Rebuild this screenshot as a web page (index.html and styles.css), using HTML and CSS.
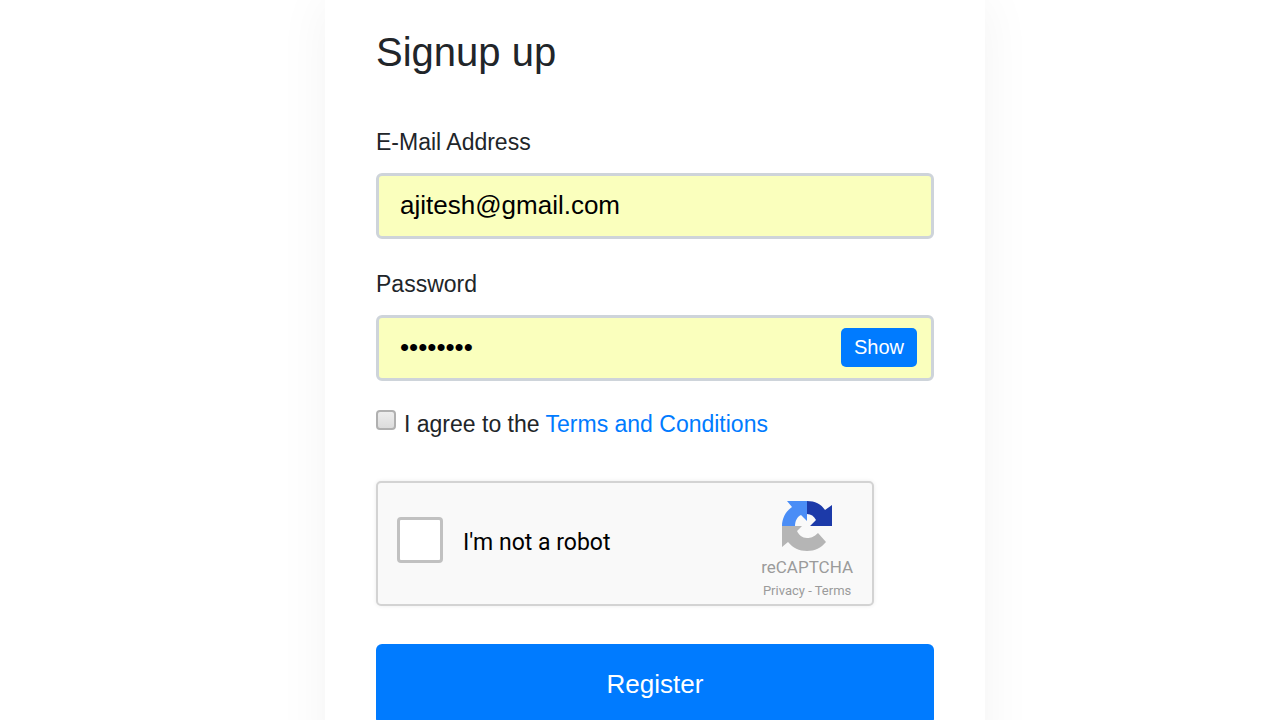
FILE: index.html
```html
<!DOCTYPE html>
<html lang="en">
<head>
  <meta charset="UTF-8" />
  <meta name="viewport" content="width=device-width, initial-scale=1.0"/>
  <title>Signup</title>
  <link rel="stylesheet" href="styles.css">
</head>
<body>

  <main class="card">
    <h1 class="card-title">Signup up</h1>

    <form class="signup">
      <div class="form-group">
        <label for="email">E-Mail Address</label>
        <input class="form-control" id="email" type="email" value="ajitesh@gmail.com">
      </div>

      <div class="form-group">
        <label for="password">Password</label>
        <div class="password-box">
          <input class="form-control" id="password" type="password" value="password">
          <button class="show-btn" type="button">Show</button>
        </div>
      </div>

      <div class="agree">
        <input class="agree-check" id="agree" type="checkbox">
        <label for="agree">I agree to the <a href="#">Terms and Conditions</a></label>
      </div>

      <!-- Captcha -->
      <div class="captcha">
        <input class="captcha-check" id="robot" type="checkbox">
        <label class="captcha-label" for="robot">I'm not a robot</label>
        <div class="captcha-brand">
          <svg class="captcha-logo" width="50" height="50" viewBox="0 0 50 50" aria-hidden="true">
            <path fill="#4a8df6" d="M25 0v20l-6-6c-4 2-6 6-6 11H0C0 17 4 10 10 6L5 0z"/>
            <path fill="#1c3aa9" d="M25 0c8 0 14 3 18 9l7-5v21H28l6-6c-2-4-5-6-9-6z"/>
            <path fill="#b5b5b5" d="M0 25h20l-5 5c2 4 5 7 10 7 4 0 7-1 11-5l8 9c-5 6-11 9-19 9S11 47 6 41l-6 5z"/>
          </svg>
          <span class="captcha-name">reCAPTCHA</span>
          <span class="captcha-links"><a href="#">Privacy</a> - <a href="#">Terms</a></span>
        </div>
      </div>

      <button class="register-btn" type="submit">Register</button>
    </form>
  </main>

</body>
</html>
```

FILE: styles.css
```css
* {
  box-sizing: border-box;
}

body {
  margin: 0;
  padding-left: 30px;
  background-color: white;
  color: #212529;
  font-family: "Liberation Sans", Arial, sans-serif;
  font-size: 23px;
  line-height: 34px;
}

a {
  color: #007bff;
  text-decoration: none;
}

button {
  background-color: #007bff;
  color: white;
  border: none;
  font-family: inherit;
  cursor: pointer;
}

.card {
  max-width: 660px;
  margin: 0 auto;
  padding: 28px 51px 51px;
  background-color: white;
  box-shadow: 0 0 50px rgba(0,0,0,0.05);
}

.card-title {
  margin: 0 0 49px;
  font-size: 40px;
  font-weight: normal;
  line-height: 48px;
}

.form-group {
  margin-bottom: 28px;
}

.form-group label {
  display: block;
  margin-bottom: 14px;
}

.form-control {
  display: block;
  width: 100%;
  height: 66px;
  padding: 0 21px 2px;
  background-color: #faffbd;
  color: black;
  border: 3px solid #ced4da;
  border-radius: 6px;
  font-family: inherit;
  font-size: 26px;
}

.password-box {
  position: relative;
}

.show-btn {
  position: absolute;
  top: 13px;
  right: 17px;
  width: 76px;
  height: 39px;
  border-radius: 5px;
  font-size: 20px;
}

.agree {
  display: flex;
  align-items: flex-start;
  gap: 8px;
  margin-bottom: 42px;
  line-height: 30px;
}

.agree-check {
  appearance: none;
  width: 20px;
  height: 20px;
  margin: 1px 0 0;
  background: linear-gradient(#ededed, #dcdcdc);
  border: 2px solid #b0b0b0;
  border-radius: 4px;
}

.captcha {
  display: flex;
  align-items: center;
  max-width: 498px;
  height: 125px;
  margin-bottom: 38px;
  padding: 0 19px;
  background-color: #f9f9f9;
  border: 2px solid #d3d3d3;
  border-radius: 5px;
  box-shadow: 0 0 4px rgba(0,0,0,0.08);
  font-family: Roboto, sans-serif;
}

.captcha-check {
  appearance: none;
  width: 46px;
  height: 46px;
  margin: 0 20px 8px 0;
  background-color: white;
  border: 3px solid #c1c1c1;
  border-radius: 4px;
}

.captcha-label {
  margin-bottom: 2px;
  color: black;
}

.captcha-brand {
  display: flex;
  flex-direction: column;
  align-items: center;
  margin-left: auto;
  padding-top: 16px;
  color: #9b9b9b;
}

.captcha-name {
  margin-top: 4px;
  font-size: 17px;
  line-height: 24px;
}

.captcha-links {
  font-size: 13px;
  line-height: 24px;
}

.captcha-links a {
  color: inherit;
}

.register-btn {
  width: 100%;
  height: 81px;
  border-radius: 6px;
  font-size: 26px;
}
```
